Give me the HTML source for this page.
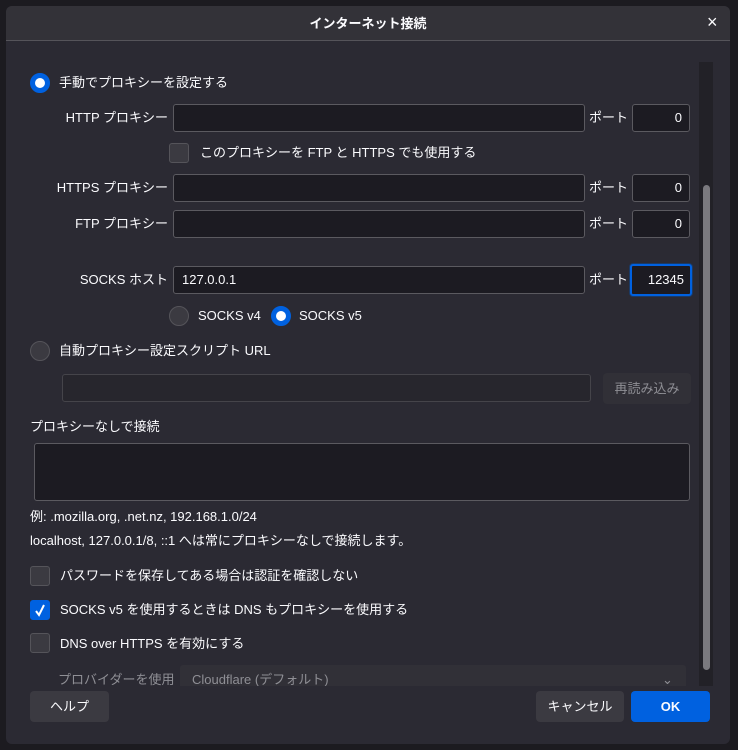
<!DOCTYPE html><html><head><meta charset="utf-8"><style>
*{box-sizing:border-box;margin:0;padding:0}
body{width:738px;height:750px;background:#1c1b20;font-family:"Liberation Sans","Noto Sans CJK JP",sans-serif;font-size:13px;color:#fbfbfe;position:relative;overflow:hidden}
.a{position:absolute}
.dlg{left:6px;top:6px;width:724px;height:738px;background:#2b2a33;border-radius:6px;overflow:hidden}
.hdr{left:0;top:0;width:724px;height:35px;background:#333238;border-bottom:1px solid #55545a}
.t{position:absolute;white-space:nowrap;line-height:16px}
.in{position:absolute;background:#1c1b22;border:1px solid #5b5a60;border-radius:3px}
.rd{position:absolute;width:20px;height:20px;border-radius:50%;background:#3b3a41;border:1px solid #55545a}
.rd.on{background:#fff;border:5px solid #0061e0}
.cb{position:absolute;width:20px;height:20px;border-radius:3px;background:#3b3a41;border:1px solid #55545a}
.btn{position:absolute;background:#3b3a41;border-radius:4px;text-align:center;line-height:31px;height:31px}
</style></head><body>
<div class="a dlg">
<div class="a hdr"></div>
<div class="t" style="left:0;width:724px;text-align:center;top:10px;font-weight:bold">インターネット接続</div>
<div class="t" style="left:701px;top:8px;font-size:18px">×</div>
</div>
<div class="a" style="left:6px;top:42px;width:724px;height:644px;overflow:hidden">
<div class="a" style="left:-6px;top:-42px;width:738px;height:750px">
<div class="rd on" style="left:30px;top:73px"></div>
<div class="t" style="left:59px;top:75px">手動でプロキシーを設定する</div>
<div class="t" style="left:0;width:168px;text-align:right;top:110px">HTTP プロキシー</div>
<div class="in" style="left:173px;top:104px;width:412px;height:28px"></div>
<div class="t" style="left:589px;top:110px">ポート</div>
<div class="in" style="left:632px;top:104px;width:58px;height:28px"></div><div class="t" style="left:632px;width:50px;text-align:right;top:110px">0</div>
<div class="cb" style="left:169px;top:143px"></div>
<div class="t" style="left:200px;top:145px">このプロキシーを FTP と HTTPS でも使用する</div>
<div class="t" style="left:0;width:168px;text-align:right;top:180px">HTTPS プロキシー</div>
<div class="in" style="left:173px;top:174px;width:412px;height:28px"></div>
<div class="t" style="left:589px;top:180px">ポート</div>
<div class="in" style="left:632px;top:174px;width:58px;height:28px"></div><div class="t" style="left:632px;width:50px;text-align:right;top:180px">0</div>
<div class="t" style="left:0;width:168px;text-align:right;top:216px">FTP プロキシー</div>
<div class="in" style="left:173px;top:210px;width:412px;height:28px"></div>
<div class="t" style="left:589px;top:216px">ポート</div>
<div class="in" style="left:632px;top:210px;width:58px;height:28px"></div><div class="t" style="left:632px;width:50px;text-align:right;top:216px">0</div>
<div class="t" style="left:0;width:168px;text-align:right;top:272px">SOCKS ホスト</div>
<div class="in" style="left:173px;top:266px;width:412px;height:28px"></div>
<div class="t" style="left:182px;top:272px">127.0.0.1</div>
<div class="t" style="left:589px;top:272px">ポート</div>
<div class="in" style="left:630px;top:264px;width:62px;height:32px;border:2px solid #0061e0;box-shadow:0 0 0 1px #1a3a66"></div><div class="t" style="left:632px;width:52px;text-align:right;top:272px">12345</div>
<div class="rd" style="left:169px;top:306px"></div>
<div class="t" style="left:198px;top:308px">SOCKS v4</div>
<div class="rd on" style="left:271px;top:306px"></div>
<div class="t" style="left:299px;top:308px">SOCKS v5</div>
<div class="rd" style="left:30px;top:341px"></div>
<div class="t" style="left:59px;top:343px">自動プロキシー設定スクリプト URL</div>
<div class="in" style="left:62px;top:374px;width:529px;height:28px;border-color:#45444a;background:#27262d"></div>
<div class="btn" style="left:603px;top:373px;width:88px;background:#313037;color:#8f8f95">再読み込み</div>
<div class="t" style="left:30px;top:419px">プロキシーなしで接続</div>
<div class="in" style="left:34px;top:443px;width:656px;height:58px"></div>
<div class="t" style="left:30px;top:509px">例: .mozilla.org, .net.nz, 192.168.1.0/24</div>
<div class="t" style="left:30px;top:533px">localhost, 127.0.0.1/8, ::1 へは常にプロキシーなしで接続します。</div>
<div class="cb" style="left:30px;top:566px"></div>
<div class="t" style="left:60px;top:568px">パスワードを保存してある場合は認証を確認しない</div>
<div class="cb" style="left:30px;top:600px;background:#0061e0;border-color:#0061e0"></div>
<svg class="a" style="left:30px;top:600px" width="20" height="20"><path d="M6 11 L9 15 L14 5" stroke="#fff" stroke-width="2" fill="none"/></svg>
<div class="t" style="left:60px;top:602px">SOCKS v5 を使用するときは DNS もプロキシーを使用する</div>
<div class="cb" style="left:30px;top:633px"></div>
<div class="t" style="left:60px;top:636px">DNS over HTTPS を有効にする</div>
<div class="t" style="left:58px;top:672px;color:#8f8f95">プロバイダーを使用</div>
<div class="a" style="left:180px;top:665px;width:506px;height:30px;background:#313037;border-radius:3px"></div>
<div class="t" style="left:192px;top:672px;color:#8f8f95">Cloudflare (デフォルト)</div>
<div class="t" style="left:662px;top:672px;color:#8f8f95">⌄</div>
<div class="a" style="left:699px;top:62px;width:14px;height:624px;background:#222127"></div>
<div class="a" style="left:703px;top:185px;width:7px;height:485px;background:#7a797e;border-radius:4px"></div>
</div></div>
<div class="btn" style="left:30px;top:691px;width:79px">ヘルプ</div>
<div class="btn" style="left:536px;top:691px;width:88px">キャンセル</div>
<div class="btn" style="left:631px;top:691px;width:79px;background:#0061e0;font-weight:bold">OK</div>
</body></html>
